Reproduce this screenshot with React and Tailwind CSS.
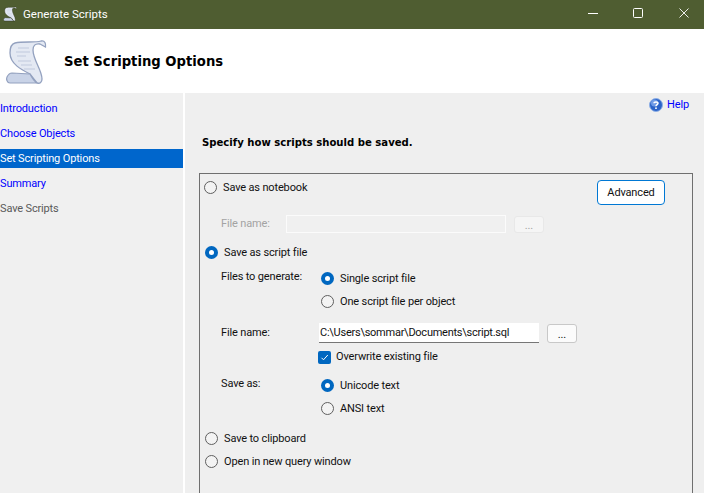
const ui = { fontFamily: 'Roboto, "Noto Sans", sans-serif' };

function Radio({ checked }) {
  return checked ? (
    <span className="w-[13px] h-[13px] mb-[2px] rounded-full bg-[#0067c0] flex items-center justify-center shrink-0">
      <span className="w-[5px] h-[5px] rounded-full bg-white" />
    </span>
  ) : (
    <span className="w-[13px] h-[13px] mb-[2px] rounded-full border border-[#5f5f5f] bg-[#f3f3f3] shrink-0" />
  );
}

function RadioRow({ checked, label, className = "" }) {
  return (
    <div className={"flex items-center h-[18px] gap-[6px] text-[#111111] " + className}>
      <Radio checked={checked} />
      <span>{label}</span>
    </div>
  );
}

function Scroll({ size = 48, stroke = "#93a1bf" }) {
  return (
    <svg width={size} height={size} viewBox="0 0 48 48">
      <path d="M10 5 C18 3 30 5 36 3 C40 2 41 6 40.5 9 L35 6 C30 5 28 8 28 12 C28 22 37 32 37 41 C37 44 35 46 32 45 L25 36 C17 32 5 26 5 15 C5 10 6 6 10 5 Z" fill="#e4e9f3" stroke={stroke} strokeWidth="1.3" />
      <path d="M7 35 L25 36 C27 40 29 43 32 45 L5 45 C2 45 1 41 2 39 C3 37 5 35 7 35 Z" fill="#c9d3e7" stroke={stroke} strokeWidth="1.2" />
      <path d="M13 10H24M11 14H25M12 18H21M13 23H26M16 27H27M19 31H30" stroke="#c0cadd" strokeWidth="1.2" />
    </svg>
  );
}

function HelpIcon() {
  return (
    <svg width="14" height="14" viewBox="0 0 14 14">
      <circle cx="7" cy="7" r="6.5" fill="#2a63c8" stroke="#8fb0e6" />
      <circle cx="5.5" cy="5" r="3.5" fill="#6f9be6" />
      <path d="M5 5.3 C5 3.4 9 3.4 9 5.3 C9 6.6 7 6.6 7 8.2" fill="none" stroke="#fff" strokeWidth="1.5" />
      <rect x="6.2" y="9.4" width="1.6" height="1.6" fill="#fff" />
    </svg>
  );
}

const nav = [
  ["Introduction", "text-[#0000ff]"],
  ["Choose Objects", "text-[#0000ff]"],
  ["Set Scripting Options", "text-white bg-[#0066cc]"],
  ["Summary", "text-[#0000ff]"],
  ["Save Scripts", "text-[#5a5a5a]"],
];

export default function App() {
  return (
    <div className="w-[704px] h-[493px] overflow-hidden flex flex-col bg-white text-[11px] tracking-[-0.15px]" style={ui}>
      <div className="h-[29px] shrink-0 bg-[#4f5d31] flex items-center text-white">
        <div className="ml-[3px] mb-[2px] w-[16px] h-[16px]">
          <Scroll size={16} stroke="#2a3018" />
        </div>
        <span className="ml-[4px] text-[11.5px] tracking-normal">Generate Scripts</span>
        <div className="ml-auto mb-[3px] flex items-center">
          <svg width="10" height="10" viewBox="0 0 10 10" className="mr-[35px]">
            <path d="M0 5.5H10" stroke="#fff" />
          </svg>
          <svg width="10" height="10" viewBox="0 0 10 10" className="mr-[36px]">
            <rect x="0.5" y="0.5" width="9" height="9" rx="1" fill="none" stroke="#fff" />
          </svg>
          <svg width="10" height="10" viewBox="0 0 10 10" className="mr-[15px]">
            <path d="M0.5 0.5L9.5 9.5M9.5 0.5L0.5 9.5" stroke="#fff" strokeWidth="0.9" />
          </svg>
        </div>
      </div>

      <div className="h-[64px] shrink-0 bg-white flex items-center">
        <div className="ml-[5px] mt-[1px]"><Scroll /></div>
        <h1 className="ml-[11px] mt-[1px] text-[13.2px] tracking-normal font-bold text-black" style={{ fontFamily: '"DejaVu Sans", sans-serif' }}>
          Set Scripting Options
        </h1>
      </div>

      <div className="flex-1 flex min-h-0 gap-[2px]">
        <nav className="w-[183px] shrink-0 bg-[#f0f0f0] pt-[6px] flex flex-col gap-[6px]">
          {nav.map(([label, cls]) => (
            <div key={label} className={"h-[19px] pt-[2px] flex items-center " + cls}>{label}</div>
          ))}
        </nav>

        <main className="flex-1 bg-[#efefef] flex flex-col min-h-0 pl-[14px] pr-[11px]">
          <div className="h-[22px] pt-[2px] flex justify-end items-center gap-[4px] pr-[4px] text-[#0000ff]">
            <HelpIcon />
            <span>Help</span>
          </div>
          <h2 className="mt-[20px] ml-[3px] h-[16px] leading-[16px] text-[10.1px] tracking-normal font-bold text-black" style={{ fontFamily: '"DejaVu Sans", sans-serif' }}>
            Specify how scripts should be saved.
          </h2>
          <section className="mt-[22px] flex-1 border border-b-0 border-[#6f6f6f] pl-[4px] pr-[27px] pt-[5px] flex flex-col">
            <div className="flex justify-between items-start h-[27px]">
              <RadioRow label="Save as notebook" />
              <button className="mt-[1px] pt-[2px] w-[68px] h-[25px] rounded-[4px] bg-white border-[1.5px] border-[#0078d4] text-[#111111] flex items-center justify-center">
                Advanced
              </button>
            </div>

            <div className="mt-[8px] h-[20px] flex items-center text-[#a3a3a3]">
              <span className="ml-[17px] w-[65px] pt-[1px]">File name:</span>
              <span className="w-[220px] h-[18px] bg-[#f0f0f0] border border-[#fbfbfb]" />
              <span className="ml-[8px] w-[30px] h-[17px] rounded-[3px] bg-[#f5f5f5] border border-[#e8e8e8] flex items-center justify-center leading-none pt-[2px]">...</span>
            </div>

            <RadioRow checked label="Save as script file" className="mt-[10px] ml-[1px]" />

            <div className="mt-[6px] ml-[17px] flex">
              <span className="w-[100px] h-[18px] pt-[1px] flex items-center text-[#111111]">Files to generate:</span>
              <div className="mt-[2px] flex flex-col gap-[5px]">
                <RadioRow checked label="Single script file" />
                <RadioRow label="One script file per object" />
              </div>
            </div>

            <div className="mt-[12px] ml-[17px] h-[20px] flex items-center text-[#111111]">
              <span className="w-[98px] pt-[1px]">File name:</span>
              <span className="w-[220px] h-[20px] bg-white border-b border-[#767676] pl-[1px] pt-[1px] flex items-center tracking-[-0.25px]">C:\Users\sommar\Documents\script.sql</span>
              <span className="ml-[8px] w-[30px] h-[19px] rounded-[3px] bg-[#fbfbfb] border border-[#c8c8c8] flex items-center justify-center leading-none pt-[2px]">...</span>
            </div>

            <div className="mt-[5px] ml-[114px] h-[18px] flex items-center gap-[5px] text-[#111111]">
              <span className="w-[13px] h-[13px] rounded-[2px] bg-[#0067c0] flex items-center justify-center">
                <svg width="9" height="9" viewBox="0 0 9 9"><path d="M1.5 4.8L3.5 6.8L7.8 2" fill="none" stroke="#fff" strokeWidth="1" /></svg>
              </span>
              <span className="pt-[1px]">Overwrite existing file</span>
            </div>

            <div className="mt-[11px] ml-[17px] flex">
              <span className="w-[100px] h-[15px] flex items-center text-[#111111]">Save as:</span>
              <div className="flex flex-col gap-[5px]">
                <RadioRow checked label="Unicode text" />
                <RadioRow label="ANSI text" />
              </div>
            </div>

            <RadioRow label="Save to clipboard" className="mt-[12px] ml-[1px]" />
            <RadioRow label="Open in new query window" className="mt-[5px] ml-[1px]" />
          </section>
        </main>
      </div>
    </div>
  );
}
